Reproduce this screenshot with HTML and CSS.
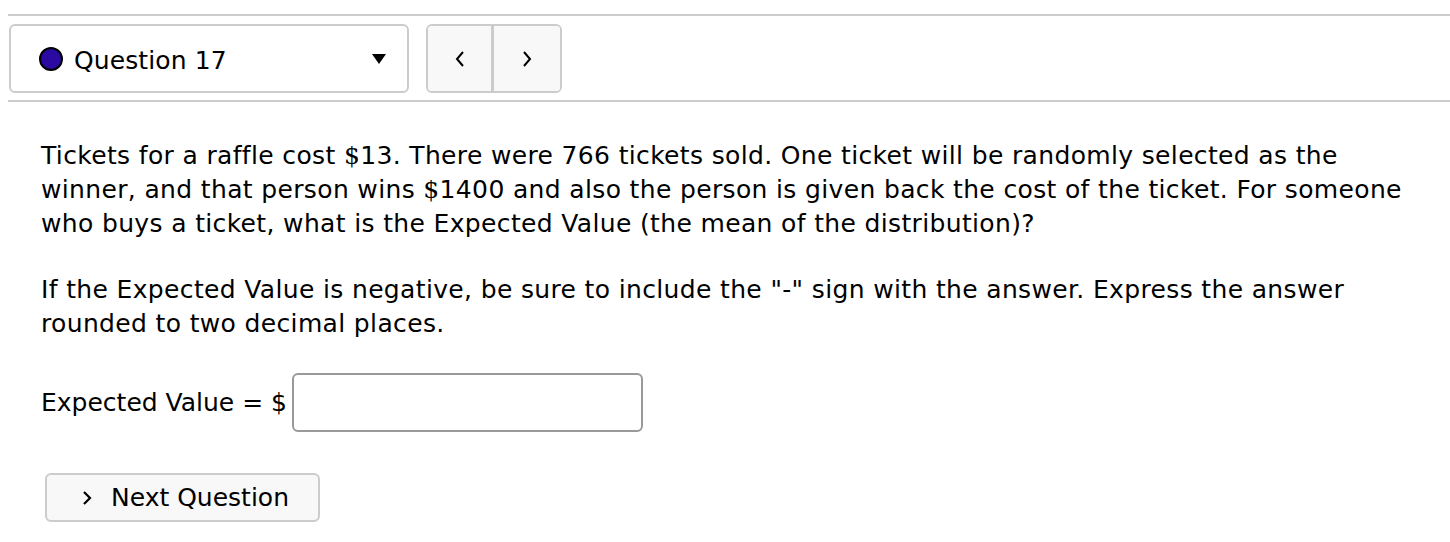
FILE: index.html
```html
<!DOCTYPE html>
<html>
<head>
<meta charset="utf-8">
<link rel="stylesheet" href="styles.css">
</head>
<body>
<div class="page">
  <div class="nav">
    <div class="select">
      <span class="dot"></span>
      <span class="qlabel">Question 17</span>
      <span class="caret"></span>
    </div>
    <div class="arrows">
      <button class="arrow prev"><svg width="14" height="20" viewBox="0 0 14 20"><path d="M10 3 L4 10 L10 17" fill="none" stroke="#000" stroke-width="2"/></svg></button>
      <button class="arrow next"><svg width="14" height="20" viewBox="0 0 14 20"><path d="M4 3 L10 10 L4 17" fill="none" stroke="#000" stroke-width="2"/></svg></button>
    </div>
  </div>
  <div class="question">
    <p>Tickets for a raffle cost <span class="m">$</span>13. There were 766 tickets sold. One ticket will be randomly selected as the winner, and that person wins <span class="m">$</span>1400 and also the person is given back the cost of the ticket. For someone who buys a ticket, what is the Expected Value (the mean of the distribution)?</p>
    <p>If the Expected Value is negative, be sure to include the "-" sign with the answer. Express the answer rounded to two decimal places.</p>
    <div class="answer">
      <span class="label">Expected Value = $</span>
      <input class="field" type="text">
    </div>
    <button class="nextq"><svg width="12" height="18" viewBox="0 0 12 18"><path d="M3 3 L9 9 L3 15" fill="none" stroke="#000" stroke-width="2.2"/></svg><span>Next Question</span></button>
  </div>
</div>
</body>
</html>
```
FILE: styles.css
```css
html, body {
  margin: 0;
  padding: 0;
  background: #fff;
}
body {
  font-family: "DejaVu Sans", sans-serif;
  color: #000;
}
.page {
  padding: 14px 0 0 8px;
}
.nav {
  border-top: 2px solid #ccc;
  border-bottom: 2px solid #ccc;
  padding: 8px 0 7px 1px;
  display: flex;
  gap: 17px;
}
.select {
  border: 2px solid #ccc;
  border-radius: 6px;
  box-sizing: border-box;
  width: 400px;
  height: 69px;
  display: flex;
  align-items: center;
  padding: 0 0 0 28px;
}
.dot {
  width: 20px;
  height: 20px;
  border-radius: 50%;
  background: #2a0aa0;
  border: 2px solid #000;
  margin-right: 11px;
}
.qlabel {
  font-size: 25px;
  flex: 1;
  letter-spacing: 0.1px;
  padding-top: 4px;
}
.caret {
  width: 0;
  height: 0;
  border-left: 7px solid transparent;
  border-right: 7px solid transparent;
  border-top: 10px solid #000;
  margin-right: 21px;
}
.arrows {
  display: flex;
  border: 2px solid #ccc;
  border-radius: 6px;
  overflow: hidden;
  height: 69px;
  box-sizing: border-box;
}
.arrow {
  width: 66px;
  background: #f8f8f8;
  border: none;
  padding: 0;
  display: flex;
  align-items: center;
  justify-content: center;
}
.arrow.prev {
  border-right: 3px solid #ccc;
}
.question {
  padding: 37px 0 0 33px;
  font-size: 25px;
  line-height: 34px;
  letter-spacing: 0.35px;
}
.question p {
  margin: 0 0 32px 0;
  width: 1385px;
}
.m {
  font-family: "DejaVu Serif", serif;
}
.answer {
  display: flex;
  align-items: center;
  gap: 5px;
  margin-top: 32px;
}
.label {
  letter-spacing: 0;
}
.field {
  width: 351px;
  height: 59px;
  box-sizing: border-box;
  border: 2px solid #999;
  border-radius: 6px;
  font-size: 24px;
}
.nextq {
  margin: 41px 0 0 4px;
  width: 275px;
  height: 49px;
  box-sizing: border-box;
  background: #f8f8f8;
  border: 2px solid #ccc;
  border-radius: 6px;
  display: flex;
  align-items: center;
  gap: 18px;
  padding: 0 0 0 34px;
  font-family: inherit;
  font-size: 25px;
  color: #000;
}
```
